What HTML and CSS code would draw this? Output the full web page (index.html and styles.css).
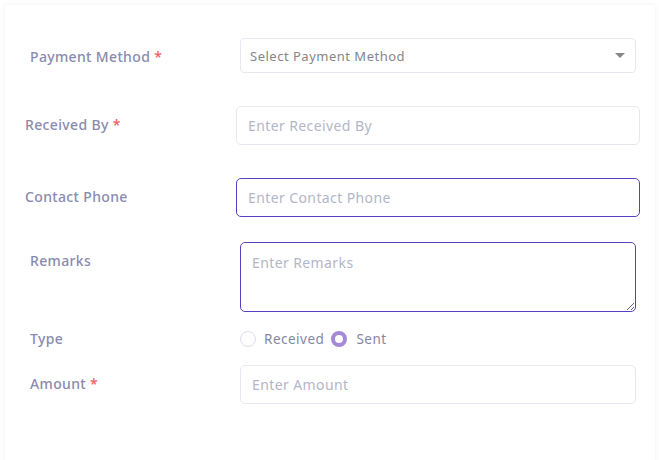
FILE: index.html
```html
<!DOCTYPE html>
<html lang="en">

<head>
    <meta charset="UTF-8">
    <meta name="viewport" content="width=device-width, initial-scale=1.0">
    <title>Payment</title>
    <link rel="stylesheet" href="styles.css">
</head>

<body>
    <div class="card">
        <form class="payment-form">

            <div class="form-row row-a">
                <label class="form-label">Payment Method <span class="req">*</span></label>
                <div class="form-field">
                    <div class="select-box">
                        <span>Select Payment Method</span>
                        <span class="caret"></span>
                    </div>
                </div>
            </div>

            <div class="form-row row-b">
                <label class="form-label">Received By <span class="req">*</span></label>
                <div class="form-field">
                    <input type="text" class="form-input tall" placeholder="Enter Received By">
                </div>
            </div>

            <div class="form-row row-b">
                <label class="form-label">Contact Phone</label>
                <div class="form-field">
                    <input type="text" class="form-input tall active phone" placeholder="Enter Contact Phone">
                </div>
            </div>

            <div class="form-row row-a">
                <label class="form-label">Remarks</label>
                <div class="form-field">
                    <textarea class="form-input area active" placeholder="Enter Remarks"></textarea>
                </div>
            </div>

            <div class="form-row row-a row-type">
                <label class="form-label">Type</label>
                <div class="form-field radio-group">
                    <span class="radio"></span><span class="radio-text">Received</span>
                    <span class="radio checked"></span><span class="radio-text">Sent</span>
                </div>
            </div>

            <div class="form-row row-a">
                <label class="form-label">Amount <span class="req">*</span></label>
                <div class="form-field">
                    <input type="text" class="form-input tall" placeholder="Enter Amount">
                </div>
            </div>

        </form>
    </div>
</body>

</html>
```

FILE: styles.css
```css
body {
    margin: 0;
    padding: 0;
    background: #ffffff;
    font-family: "Noto Sans", sans-serif;
}

.card {
    margin: 5px 4px 0 5px;
    height: 470px;
    background: #ffffff;
    box-shadow: 0 0 6px rgba(0, 0, 0, 0.06);
}

.payment-form {
    padding-top: 33px;
}

.form-row {
    display: flex;
    align-items: flex-start;
}

/* two slightly different column offsets, like the original */
.row-a {
    padding: 0 19px 0 25px;
}

.row-b {
    padding: 0 15px 0 20px;
}

.row-a .form-label {
    width: 210px;
}

.row-b .form-label {
    width: 211px;
}

.form-label {
    flex: none;
    font-size: 14px;
    font-weight: 500;
    letter-spacing: 0.35px;
    color: #8a8aae;
    line-height: 20px;
    padding-top: 9px;
}

.req {
    color: #f25a63;
}

.form-field {
    flex: 1;
}

.select-box {
    height: 35px;
    box-sizing: border-box;
    border: 1px solid #e7e7f0;
    border-radius: 4px;
    display: flex;
    align-items: center;
    justify-content: space-between;
    padding: 0 10px 0 9px;
    font-size: 13px;
    letter-spacing: 0.5px;
    color: #868686;
    margin-bottom: 33px;
}

.caret {
    width: 0;
    height: 0;
    border-left: 5px solid transparent;
    border-right: 5px solid transparent;
    border-top: 5px solid #888888;
}

.form-input {
    display: block;
    width: 100%;
    box-sizing: border-box;
    border: 1px solid #e7e7f0;
    border-radius: 5px;
    padding: 0 11px;
    font-family: "Noto Sans", sans-serif;
    font-size: 14px;
    letter-spacing: 0.4px;
    color: #444;
    background: #fff;
    outline: none;
}

.form-input::placeholder {
    color: #b3b6c8;
}

.tall {
    height: 39px;
    margin-bottom: 33px;
}

.tall.phone {
    margin-bottom: 25px;
}

.active {
    border-color: #5b3fc2;
}

.area {
    height: 70px;
    padding-top: 10px;
    resize: vertical;
    margin-bottom: 17px;
}

.row-type {
    align-items: center;
    margin-bottom: 16px;
}

.row-type .form-label {
    padding-top: 0;
}

.radio-group {
    display: flex;
    align-items: center;
    height: 20px;
}

.radio {
    width: 14px;
    height: 14px;
    border: 1px solid #dedde8;
    border-radius: 50%;
    background: #fff;
    margin-right: 8px;
}

.radio.checked {
    width: 8px;
    height: 8px;
    border: 4px solid #a489d8;
    background: #fff;
    margin-right: 9px;
}

.radio-text {
    font-size: 13.5px;
    letter-spacing: 0.5px;
    color: #86869f;
    margin-right: 7px;
}

.row-type + .row-a .form-label {
    padding-top: 9px;
}
```
